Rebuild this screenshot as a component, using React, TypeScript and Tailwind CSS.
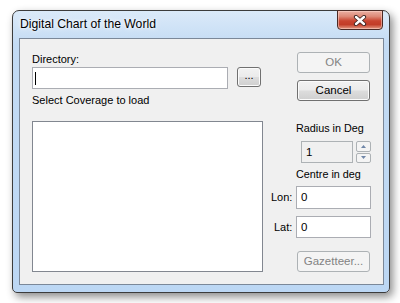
import React from 'react';

const enabledBtn =
  'rounded-[3px] border border-[#707070] bg-[linear-gradient(to_bottom,#f2f2f2_0%,#ebebeb_48%,#dddddd_52%,#cfcfcf_100%)] shadow-[inset_0_0_0_1px_#fbfbfb] text-black flex items-center justify-center';
const disabledBtn =
  'rounded-[3px] border border-[#adb2b5] bg-[#f4f4f4] text-[#838383] flex items-center justify-center';

const CloseGlyph = () => (
  <svg width="14" height="11" viewBox="0 0 14 11">
    <path d="M3 2 L11 9 M11 2 L3 9" stroke="#3b2320" strokeWidth="4.2" strokeLinecap="round" />
    <path d="M3 2 L11 9 M11 2 L3 9" stroke="#ffffff" strokeWidth="2.4" strokeLinecap="round" />
  </svg>
);

export default function App() {
  return (
    <div className="w-[400px] h-[303px] bg-white pl-[12px] pt-[10px] font-['Liberation_Sans',Arial,sans-serif] text-[11px] leading-[15px] text-black">
      {/* window frame */}
      <div className="relative w-[378px] h-[283px] rounded-t-[7px] rounded-b-[5px] border border-[#3c3c3c] bg-[linear-gradient(to_bottom,#dbeaf9_0%,#c3dbf4_12%,#bcd7f4_100%)] shadow-[3px_4px_9px_rgba(0,0,0,0.45)]">
        {/* title bar */}
        <div className="h-[27px] flex items-center pl-[7px] text-[12.2px] [text-shadow:0_0_6px_#ffffff,0_0_3px_#ffffff]">
          Digital Chart of the World
        </div>
        <div className="absolute top-[-1px] right-[6px] w-[46px] h-[20px] rounded-b-[4px] border border-[#4a2a25] bg-[linear-gradient(to_bottom,#ebb0a3_0%,#de8a78_30%,#c9442f_55%,#c23d28_75%,#e49a83_100%)] shadow-[inset_0_0_0_1px_rgba(255,220,210,0.5)] flex items-center justify-center">
          <CloseGlyph />
        </div>

        {/* client area */}
        <div className="ml-[6px] w-[365px] h-[247px] border border-[#7b8899] bg-[#f0f0f0] flex">
          {/* left column */}
          <div className="pl-[12px] w-[251px] flex flex-col">
            <div className="pt-[13px]">Directory:</div>
            <div className="flex items-start">
              <div className="w-[196px] h-[22px] bg-white border border-[#abadb3] flex items-center pl-[2px]">
                <span className="w-px h-[13px] bg-black" />
              </div>
              <button className={`${enabledBtn} ml-[9px] w-[24px] h-[20px] pb-[3px]`}>...</button>
            </div>
            <div className="mt-[4px]">Select Coverage to load</div>
            <div className="mt-[13px] w-[231px] h-[151px] bg-white border border-[#828790]" />
          </div>

          {/* right column */}
          <div className="w-[100px] flex flex-col">
            <button className={`${disabledBtn} mt-[13px] ml-[26px] w-[73px] h-[21px] text-[11.5px]`}>OK</button>
            <button className={`${enabledBtn} mt-[7px] ml-[26px] w-[73px] h-[21px] text-[11.5px]`}>Cancel</button>

            <div className="mt-[20px] ml-[25px] text-[10.8px]">Radius in Deg</div>
            <div className="mt-[5px] ml-[30px] flex">
              <div className="w-[52px] h-[22px] border border-[#adb2b5] bg-[#f0f0f0] pl-[4px] flex items-center text-[11.5px]">1</div>
              <div className="ml-[3px] w-[15px] h-[22px] flex flex-col gap-px">
                <div className="flex-1 rounded-[2px] border border-[#adb2b5] bg-[#f4f4f4] flex items-center justify-center">
                  <svg width="5" height="3" viewBox="0 0 5 3"><path d="M0 3 L2.5 0 L5 3 Z" fill="#6f86a8" /></svg>
                </div>
                <div className="flex-1 rounded-[2px] border border-[#adb2b5] bg-[#f4f4f4] flex items-center justify-center">
                  <svg width="5" height="3" viewBox="0 0 5 3"><path d="M0 0 L5 0 L2.5 3 Z" fill="#6f86a8" /></svg>
                </div>
              </div>
            </div>

            <div className="mt-[4px] ml-[25px] text-[10.8px]">Centre in deg</div>
            <div className="mt-[4px] flex items-center">
              <span className="w-[25px]">Lon:</span>
              <div className="w-[75px] h-[23px] bg-white border border-[#abadb3] pl-[4px] flex items-center text-[11.5px]">0</div>
            </div>
            <div className="mt-[7px] flex items-center">
              <span className="w-[25px] pl-[3px]">Lat:</span>
              <div className="w-[75px] h-[22px] bg-white border border-[#abadb3] pl-[4px] flex items-center text-[11.5px]">0</div>
            </div>

            <button className={`${disabledBtn} mt-[13px] ml-[26px] w-[73px] h-[21px] text-[11.5px]`}>Gazetteer...</button>
          </div>
        </div>
      </div>
    </div>
  );
}
